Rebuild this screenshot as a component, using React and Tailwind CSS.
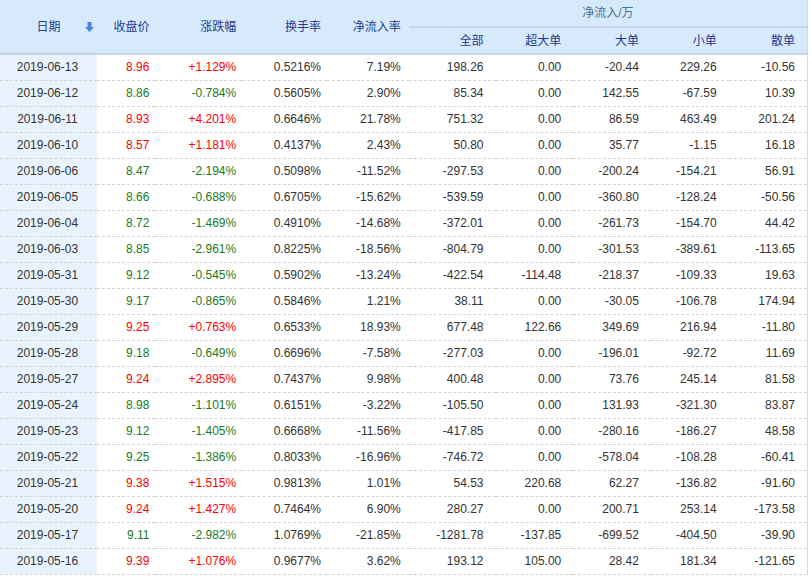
const rows = `2019-06-13 8.96 +1.129% 0.5216% 7.19% 198.26 0.00 -20.44 229.26 -10.56
2019-06-12 8.86 -0.784% 0.5605% 2.90% 85.34 0.00 142.55 -67.59 10.39
2019-06-11 8.93 +4.201% 0.6646% 21.78% 751.32 0.00 86.59 463.49 201.24
2019-06-10 8.57 +1.181% 0.4137% 2.43% 50.80 0.00 35.77 -1.15 16.18
2019-06-06 8.47 -2.194% 0.5098% -11.52% -297.53 0.00 -200.24 -154.21 56.91
2019-06-05 8.66 -0.688% 0.6705% -15.62% -539.59 0.00 -360.80 -128.24 -50.56
2019-06-04 8.72 -1.469% 0.4910% -14.68% -372.01 0.00 -261.73 -154.70 44.42
2019-06-03 8.85 -2.961% 0.8225% -18.56% -804.79 0.00 -301.53 -389.61 -113.65
2019-05-31 9.12 -0.545% 0.5902% -13.24% -422.54 -114.48 -218.37 -109.33 19.63
2019-05-30 9.17 -0.865% 0.5846% 1.21% 38.11 0.00 -30.05 -106.78 174.94
2019-05-29 9.25 +0.763% 0.6533% 18.93% 677.48 122.66 349.69 216.94 -11.80
2019-05-28 9.18 -0.649% 0.6696% -7.58% -277.03 0.00 -196.01 -92.72 11.69
2019-05-27 9.24 +2.895% 0.7437% 9.98% 400.48 0.00 73.76 245.14 81.58
2019-05-24 8.98 -1.101% 0.6151% -3.22% -105.50 0.00 131.93 -321.30 83.87
2019-05-23 9.12 -1.405% 0.6668% -11.56% -417.85 0.00 -280.16 -186.27 48.58
2019-05-22 9.25 -1.386% 0.8033% -16.96% -746.72 0.00 -578.04 -108.28 -60.41
2019-05-21 9.38 +1.515% 0.9813% 1.01% 54.53 220.68 62.27 -136.82 -91.60
2019-05-20 9.24 +1.427% 0.7464% 6.90% 280.27 0.00 200.71 253.14 -173.58
2019-05-17 9.11 -2.982% 1.0769% -21.85% -1281.78 -137.85 -699.52 -404.50 -39.90
2019-05-16 9.39 +1.076% 0.9677% 3.62% 193.12 105.00 28.42 181.34 -121.65`.split("\n").map(l=>l.split(" "));

const widths = [96,58,86,84,81,86,77,77,77,78];
const hdr = "text-[#1f3a93] font-normal align-middle";

export default function App(){
  return (
    <div className="w-[812px] h-[579px] overflow-hidden bg-white" style={{fontFamily:'"Liberation Sans","Noto Sans CJK SC",sans-serif'}}>
      <table className="border-collapse text-[12px] text-[#333] w-[808px] table-fixed border-r border-[#d0dbe6]">
        <colgroup>{widths.map((w,i)=><col key={i} style={{width:w}}/>)}</colgroup>
        <thead className="bg-[#d7eafb]">
          <tr className="h-[27px]">
            <th rowSpan={2} className={hdr+" relative"}>
              <span className="pl-[0px]">日期</span>
              <svg className="absolute right-[3px] top-[22px]" width="9" height="10" viewBox="0 0 9 10">
                <path d="M2.5 0h4v5h2.5L4.5 10L0 5h2.5z" fill="#4a86d8"/>
              </svg>
            </th>
            <th rowSpan={2} className={hdr+" text-right pr-[6px]"}>收盘价</th>
            <th rowSpan={2} className={hdr+" text-right pr-[6px]"}>涨跌幅</th>
            <th rowSpan={2} className={hdr+" text-right pr-[6px]"}>换手率</th>
            <th rowSpan={2} className={hdr+" text-right pr-[8px]"}>净流入率</th>
            <th colSpan={5} className="font-normal text-[#4a6f96] border-b-2 border-[#c3d5e6]">净流入/万</th>
          </tr>
          <tr className="h-[27px] border-b-2 border-[#c3d5e6]">
            {["全部","超大单","大单","小单","散单"].map((h,i)=>(
              <th key={h} className={hdr+" text-right pr-[12px]"}>{h}</th>
            ))}
          </tr>
        </thead>
        <tbody>
          {rows.map((r,ri)=>{
            const up = r[2].startsWith("+");
            const c = up ? "text-[#ff0000]" : "text-[#1d7a1d]";
            return (
              <tr key={ri} className="h-[26px] border-b border-dashed border-[#d4d4d4]">
                {r.map((v,i)=>(
                  <td key={i} className={
                    i===0 ? "bg-[#e8f3fd] text-center pr-[2px]" :
                    (i<=2 ? c+" " : "") + "text-right " + (i>=5 ? "pr-[12px]" : i===4 ? "pr-[8px]" : "pr-[6px]")
                  }>{v}</td>
                ))}
              </tr>
            );
          })}
        </tbody>
      </table>
    </div>
  );
}
